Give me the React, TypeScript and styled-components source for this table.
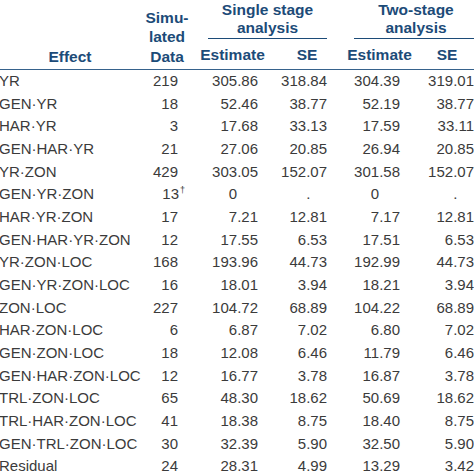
import styled, { createGlobalStyle } from "styled-components";

const GlobalStyle = createGlobalStyle`
  html, body {
    margin: 0;
    padding: 0;
    background: #ffffff;
    overflow: hidden;
  }
  body {
    font-family: "Liberation Sans", Arial, sans-serif;
  }
`;

type Row = {
  effect: string;
  sim: string;
  dagger?: boolean;
  est1: string;
  se1: string;
  est2: string;
  se2: string;
};

const rows: Row[] = [
  { effect: "YR", sim: "219", est1: "305.86", se1: "318.84", est2: "304.39", se2: "319.01" },
  { effect: "GEN·YR", sim: "18", est1: "52.46", se1: "38.77", est2: "52.19", se2: "38.77" },
  { effect: "HAR·YR", sim: "3", est1: "17.68", se1: "33.13", est2: "17.59", se2: "33.11" },
  { effect: "GEN·HAR·YR", sim: "21", est1: "27.06", se1: "20.85", est2: "26.94", se2: "20.85" },
  { effect: "YR·ZON", sim: "429", est1: "303.05", se1: "152.07", est2: "301.58", se2: "152.07" },
  { effect: "GEN·YR·ZON", sim: "13", dagger: true, est1: "0", se1: ".", est2: "0", se2: "." },
  { effect: "HAR·YR·ZON", sim: "17", est1: "7.21", se1: "12.81", est2: "7.17", se2: "12.81" },
  { effect: "GEN·HAR·YR·ZON", sim: "12", est1: "17.55", se1: "6.53", est2: "17.51", se2: "6.53" },
  { effect: "YR·ZON·LOC", sim: "168", est1: "193.96", se1: "44.73", est2: "192.99", se2: "44.73" },
  { effect: "GEN·YR·ZON·LOC", sim: "16", est1: "18.01", se1: "3.94", est2: "18.21", se2: "3.94" },
  { effect: "ZON·LOC", sim: "227", est1: "104.72", se1: "68.89", est2: "104.22", se2: "68.89" },
  { effect: "HAR·ZON·LOC", sim: "6", est1: "6.87", se1: "7.02", est2: "6.80", se2: "7.02" },
  { effect: "GEN·ZON·LOC", sim: "18", est1: "12.08", se1: "6.46", est2: "11.79", se2: "6.46" },
  { effect: "GEN·HAR·ZON·LOC", sim: "12", est1: "16.77", se1: "3.78", est2: "16.87", se2: "3.78" },
  { effect: "TRL·ZON·LOC", sim: "65", est1: "48.30", se1: "18.62", est2: "50.69", se2: "18.62" },
  { effect: "TRL·HAR·ZON·LOC", sim: "41", est1: "18.38", se1: "8.75", est2: "18.40", se2: "8.75" },
  { effect: "GEN·TRL·ZON·LOC", sim: "30", est1: "32.39", se1: "5.90", est2: "32.50", se2: "5.90" },
  { effect: "Residual", sim: "24", est1: "28.31", se1: "4.99", est2: "13.29", se2: "3.42" },
];

// column widths and right padding of the numbers
const cols = [
  { width: 140, pad: 0 },
  { width: 54, pad: 16 },
  { width: 77, pad: 13 },
  { width: 72, pad: 16 },
  { width: 73, pad: 16 },
  { width: 62, pad: 4 },
];

const navy = "#1c4b78";

const Table = styled.table`
  table-layout: fixed;
  width: 478px;
  border-collapse: collapse;
  border-spacing: 0;
`;

const Head = styled.th<{ $top?: boolean }>`
  padding: 0;
  font-size: 15.5px;
  font-weight: bold;
  color: ${navy};
  text-align: center;
  vertical-align: ${(p) => (p.$top ? "top" : "bottom")};
  line-height: 19.5px;
`;

const GroupTitle = styled.div<{ $left: number; $right: number }>`
  margin: 0 ${(p) => p.$right}px 0 ${(p) => p.$left}px;
  padding-top: 1px;
  line-height: 18px;
  height: 37px;
  border-bottom: 1px solid ${navy};
`;

const StackedHead = styled.div`
  padding-bottom: 3px;
`;

const SubHead = styled.div`
  height: 30px;
  line-height: 28px;
  padding-top: 2px;
  box-sizing: border-box;
`;

const HeadRow = styled.tr`
  border-bottom: 1px solid #36628c;
`;

const Cell = styled.td<{ $pad: number; $first?: boolean }>`
  padding: 0 ${(p) => p.$pad}px 0 0;
  height: 22.65px;
  line-height: 22.65px;
  font-size: 15px;
  color: #3b3b3b;
  white-space: nowrap;
  text-align: ${(p) => (p.$first ? "left" : "right")};
  text-indent: ${(p) => (p.$first ? "-1px" : "0")};
`;

const Hidden = styled.span`
  visibility: hidden;
`;

const Dagger = styled.sup`
  font-size: 9px;
  line-height: 0;
  vertical-align: 6px;
  margin-left: 1px;
`;

// decimal-align the lone "0" and "." entries
const Num = ({ v }: { v: string }) => {
  if (v === "0") return <>0<Hidden>.00</Hidden></>;
  if (v === ".") return <>.<Hidden>00</Hidden></>;
  return <>{v}</>;
};

const App = () => {
  return (
    <>
      <GlobalStyle />
      <Table>
        <colgroup>
          {cols.map((c, i) => (
            <col key={i} style={{ width: c.width }} />
          ))}
        </colgroup>
        <thead>
          <tr>
            <Head rowSpan={2}>
              <StackedHead>Effect</StackedHead>
            </Head>
            <Head rowSpan={2}>
              <StackedHead>
                Simu-
                <br />
                lated
                <br />
                Data
              </StackedHead>
            </Head>
            <Head colSpan={2} $top>
              <GroupTitle $left={14} $right={16}>
                Single stage
                <br />
                analysis
              </GroupTitle>
            </Head>
            <Head colSpan={2} $top>
              <GroupTitle $left={11} $right={0}>
                Two-stage
                <br />
                analysis
              </GroupTitle>
            </Head>
          </tr>
          <HeadRow>
            <Head>
              <SubHead>Estimate</SubHead>
            </Head>
            <Head>
              <SubHead>SE</SubHead>
            </Head>
            <Head>
              <SubHead>Estimate</SubHead>
            </Head>
            <Head>
              <SubHead>SE</SubHead>
            </Head>
          </HeadRow>
        </thead>
        <tbody>
          {rows.map((r) => (
            <tr key={r.effect}>
              <Cell $pad={0} $first>
                {r.effect}
              </Cell>
              <Cell $pad={r.dagger ? cols[1].pad - 7 : cols[1].pad}>
                {r.sim}
                {r.dagger && <Dagger>†</Dagger>}
              </Cell>
              <Cell $pad={cols[2].pad}>
                <Num v={r.est1} />
              </Cell>
              <Cell $pad={cols[3].pad}>
                <Num v={r.se1} />
              </Cell>
              <Cell $pad={cols[4].pad}>
                <Num v={r.est2} />
              </Cell>
              <Cell $pad={cols[5].pad}>
                <Num v={r.se2} />
              </Cell>
            </tr>
          ))}
        </tbody>
      </Table>
    </>
  );
};

export default App;
